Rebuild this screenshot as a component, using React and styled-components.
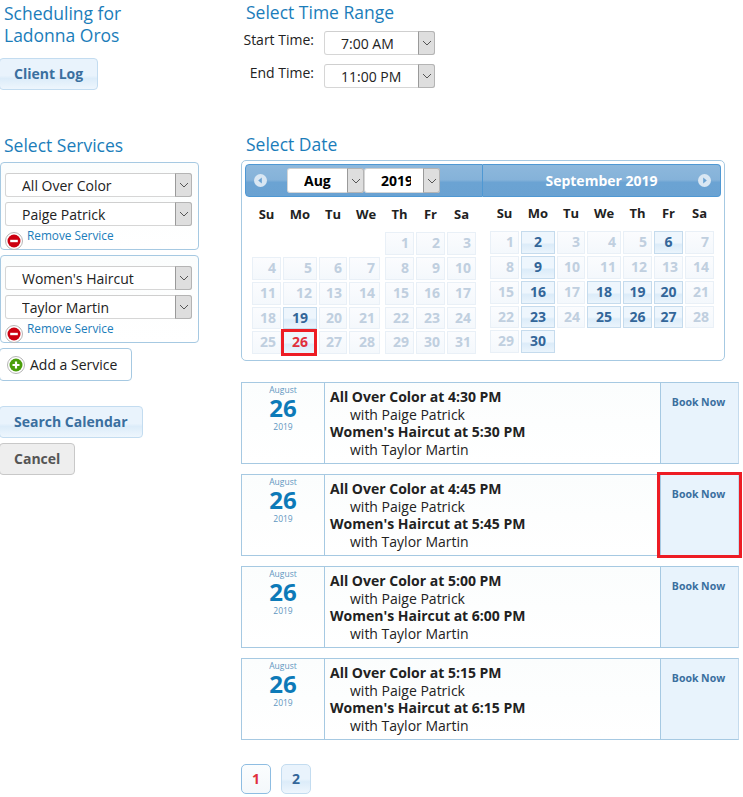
import React from 'react';
import styled, { createGlobalStyle } from 'styled-components';

const GlobalStyle = createGlobalStyle`
  html, body {
    margin: 0;
    padding: 0;
    background: #fff;
    overflow: hidden;
  }

  body {
    color: #222;
    font-family: "Open Sans", "Liberation Sans", sans-serif;
    font-size: 14px;
  }
`;

const Page = styled.div`
  display: grid;
  grid-template-columns: 241px 502px;
  width: 743px;
  height: 797px;
`;

const LeftColumn = styled.div`
  display: flex;
  flex-direction: column;
  align-items: flex-start;
  padding-top: 2px;
`;

const RightColumn = styled.div`
  display: flex;
  flex-direction: column;
  padding-top: 1px;
`;

const Heading = styled.h2`
  margin: ${({ $margin }) => $margin || 0};
  color: #1b7dba;
  font-size: 17.5px;
  font-weight: 400;
  line-height: 22px;
`;

const Button = styled.button`
  display: block;
  height: 32px;
  margin: ${({ $margin }) => $margin || 0};
  margin-left: -1px;
  padding: 0 14px 2px;
  border: 1px solid ${({ $muted }) => ($muted ? '#c8c8c8' : '#c3dcf0')};
  border-radius: 4px;
  background: ${({ $muted }) => ($muted
    ? '#eeeeee'
    : 'linear-gradient(#e9f3fc 0, #e9f3fc 55%, #dcecf9 65%, #eef6fd 100%)')};
  color: ${({ $muted }) => ($muted ? '#555' : '#3a6f9f')};
  font-family: inherit;
  font-size: 14px;
  font-weight: 700;
`;

const ServiceBox = styled.div`
  box-sizing: border-box;
  width: 199px;
  height: 88px;
  margin-top: ${({ $top }) => $top}px;
  padding: 10px 6px 0 4px;
  border: 1px solid #a6c9e2;
  border-radius: 4px;
  background: linear-gradient(#fbfdfd, #fff);
`;

const SelectBox = styled.div`
  box-sizing: border-box;
  display: flex;
  align-items: stretch;
  flex: none;
  width: ${({ $width }) => $width}px;
  height: ${({ $height }) => $height || 24}px;
  margin-bottom: ${({ $gap }) => $gap || 0}px;
  border: 1px solid #d6d6d6;
  border-top-color: #cfcfcf;
  border-radius: 3px;
  background: #fff;
`;

const SelectText = styled.span`
  flex: 1;
  min-width: 0;
  overflow: hidden;
  margin: 0 ${({ $bold }) => ($bold ? 12 : 0)}px 0 16px;
  color: ${({ $bold }) => ($bold ? '#000' : '#222')};
  font-size: 14px;
  font-weight: ${({ $bold }) => ($bold ? 700 : 400)};
  line-height: 23px;
  white-space: nowrap;
`;

const SelectArrow = styled.span`
  box-sizing: border-box;
  display: flex;
  align-items: center;
  justify-content: center;
  flex: none;
  width: 17px;
  margin: -1px -1px -1px 0;
  border: 1px solid #b4b4b4;
  border-left-color: #9a9a9a;
  border-radius: 0 3px 3px 0;
  background: #dedede;
`;

const Select = ({ children, width, gap, bold, height }) => (
  <SelectBox $width={width} $gap={gap} $height={height}>
    <SelectText $bold={bold}>{children}</SelectText>
    <SelectArrow>
      <svg width="10" height="6" viewBox="0 0 10 6" fill="none" stroke="#555" strokeWidth="1">
        <path d="M1 1l4 4 4-4" />
      </svg>
    </SelectArrow>
  </SelectBox>
);

const RemoveRow = styled.div`
  display: flex;
  align-items: flex-start;
  margin-top: 6px;
`;

const RemoveLink = styled.a`
  margin: -4px 0 0 4px;
  color: #1b7dba;
  font-size: 11.8px;
  line-height: 15px;
`;

const RoundIcon = ({ kind }) => (
  <svg width="18" height="18" viewBox="0 0 18 18">
    <circle cx="9" cy="9" r="8.5" fill="#fff" stroke="#b5b5b5" />
    <circle cx="9" cy="9" r="6.5" fill={kind === 'add' ? '#4a9e0a' : '#cc0010'} />
    {kind === 'add' ? (
      <path d="M9 5.5v7M5.5 9h7" stroke="#fff" strokeWidth="2.2" />
    ) : (
      <path d="M5.2 9h7.6" stroke="#fff" strokeWidth="2.4" />
    )}
  </svg>
);

const AddButton = styled.div`
  box-sizing: border-box;
  display: flex;
  align-items: center;
  gap: 5px;
  width: 133px;
  height: 33px;
  margin: 5px 0 0 -1px;
  padding-left: 7px;
  border: 1px solid #a6c9e2;
  border-radius: 4px;
  color: #222;
  font-size: 14px;
`;

const TimeRow = styled.div`
  display: flex;
  align-items: flex-start;
  margin-bottom: ${({ $gap }) => $gap}px;
`;

const TimeLabel = styled.span`
  width: 73px;
  margin-right: 10px;
  color: #222;
  font-size: 14px;
  line-height: 18px;
  text-align: right;
  white-space: nowrap;
`;

const Calendar = styled.div`
  box-sizing: border-box;
  display: flex;
  flex-direction: column;
  width: 484px;
  height: 201px;
  margin-top: 5px;
  padding: 3px;
  border: 1px solid #a6c9e2;
  border-radius: 5px;
`;

const CalendarHeader = styled.div`
  display: grid;
  grid-template-columns: 238px 1fr;
  height: 33px;
  flex: none;
`;

const headerBar = `
  background: linear-gradient(#8db8dc 0, #85b2d9 48%, #6ba3d3 56%, #6aa2d2 100%);
  border: 1px solid #4f98d3;
  box-sizing: border-box;
`;

const HeaderLeft = styled.div`
  ${headerBar}
  display: flex;
  align-items: flex-start;
  padding: 3px 0 0 8px;
  border-radius: 4px 0 0 4px;
`;

const HeaderRight = styled.div`
  ${headerBar}
  display: flex;
  align-items: center;
  justify-content: center;
  position: relative;
  border-left: 0;
  border-radius: 0 4px 4px 0;
  color: #fff;
  font-size: 14px;
  font-weight: 700;
`;

const NavIcon = styled.span`
  position: absolute;
  top: 9px;
  right: 9px;
  display: flex;
`;

const NavArrow = ({ dir }) => (
  <svg width="13" height="13" viewBox="0 0 13 13">
    <circle cx="6.5" cy="6.5" r="6.5" fill="#d9e7f3" />
    <path d={dir === 'left' ? 'M7.8 3.5v6l-3.6-3z' : 'M5.2 3.5v6l3.6-3z'} fill="#6ba3d3" />
  </svg>
);

const PrevSlot = styled.span`
  display: flex;
  margin: 6px 20px 0 0;
`;

const Months = styled.div`
  display: grid;
  grid-template-columns: 238px 1fr;
`;

const Month = styled.div`
  display: grid;
  grid-template-columns: 29px 34px 28px 34px 29px 29px 29px;
  grid-template-rows: 24px 23px 23px 23px 22px 23px;
  gap: 2px;
  align-content: start;
  padding: ${({ $first }) => ($first ? '9px 0 0 7px' : '8px 0 0 7px')};
`;

const Weekday = styled.span`
  color: #222;
  font-size: 13px;
  font-weight: 700;
  line-height: 16px;
  text-align: center;
`;

const Day = styled.span`
  box-sizing: border-box;
  position: relative;
  grid-column-start: ${({ $start }) => $start || 'auto'};
  margin-right: ${({ $trim }) => $trim || 0}px;
  padding: ${({ $open }) => ($open ? '0' : '0 4px 0 0')};
  border: 1px solid ${({ $open }) => ($open ? '#c5dbed' : '#e9f0f7')};
  background: ${({ $open }) => ($open
    ? 'linear-gradient(#eef6fd 0, #eef6fd 50%, #dcecf9 60%, #eaf4fc 100%)'
    : 'linear-gradient(#fbfcfe, #f4f8fc)')};
  color: ${({ $open, $today }) => ($today ? '#e0303c' : $open ? '#336699' : '#c0cfdf')};
  font-size: 14px;
  font-weight: 700;
  line-height: 20px;
  text-align: ${({ $open }) => ($open ? 'center' : 'right')};
`;

const DayMark = styled.span`
  position: absolute;
  inset: -3px -1px -3px -3px;
  border: 3px solid #ed1c24;
`;

const WEEKDAYS = ['Su', 'Mo', 'Tu', 'We', 'Th', 'Fr', 'Sa'];

const MonthGrid = ({ days, firstColumn, open, today, first }) => (
  <Month $first={first}>
    {WEEKDAYS.map((name) => <Weekday key={name}>{name}</Weekday>)}
    {Array.from({ length: days }, (_, i) => i + 1).map((day) => {
      const column = (firstColumn + day - 1) % 7;
      return (
        <Day
          key={day}
          $start={day === 1 ? firstColumn + 1 : undefined}
          $trim={first && column === 3 ? 3 : 0}
          $open={open.includes(day) || day === today}
          $today={day === today}
        >
          {day}
          {day === today && <DayMark />}
        </Day>
      );
    })}
  </Month>
);

const ResultList = styled.div`
  display: flex;
  flex-direction: column;
  gap: 10px;
  width: 498px;
  margin-top: 21px;
`;

const ResultRow = styled.div`
  box-sizing: border-box;
  display: grid;
  grid-template-columns: 83px 1fr 78px;
  height: 82px;
  border: 1px solid #a6c9e2;
  border-right-color: #c5dbed;
  background: linear-gradient(#fbfdfd, #fff);
`;

const DateCell = styled.div`
  display: flex;
  flex-direction: column;
  align-items: center;
  padding-top: 1px;
  border-right: 1px solid #a6c9e2;
`;

const DateSmall = styled.span`
  color: #5f96c0;
  font-size: 8.5px;
  line-height: 12px;
`;

const DateBig = styled.span`
  margin-bottom: 2px;
  color: #0d7ab8;
  font-size: 24px;
  font-weight: 700;
  line-height: 23px;
`;

const SlotCell = styled.div`
  padding: 5px 0 0 5px;
  color: #222;
  font-size: 14px;
  line-height: 17.5px;
`;

const SlotTitle = styled.div`
  font-weight: 700;
`;

const SlotWith = styled.div`
  padding-left: 20px;
`;

const BookCell = styled.div`
  position: relative;
  padding: 12px 2px 0 0;
  border-left: 1px solid #a6c9e2;
  background: #e8f3fc;
  color: #3a6f9f;
  font-size: 10.5px;
  font-weight: 700;
  line-height: 15px;
  text-align: center;
`;

const BookMark = styled.span`
  position: absolute;
  inset: -3px -4px -3px -4px;
  border: 3px solid #ed1c24;
`;

const Pager = styled.div`
  display: flex;
  gap: 10px;
  margin-top: 24px;
`;

const PageButton = styled.span`
  box-sizing: border-box;
  width: 30px;
  height: 30px;
  border: 1px solid ${({ $active }) => ($active ? '#8ebde2' : '#c3dcf0')};
  border-radius: 5px;
  background: ${({ $active }) => ($active
    ? 'linear-gradient(#fbfdfe, #f4f8fb)'
    : 'linear-gradient(#e9f3fc 0, #e9f3fc 50%, #dcecf9 60%, #eef6fd 100%)')};
  color: ${({ $active }) => ($active ? '#e0303c' : '#336699')};
  font-size: 14px;
  font-weight: 700;
  line-height: 28px;
  text-align: center;
`;

const SLOTS = [
  ['4:30 PM', '5:30 PM'],
  ['4:45 PM', '5:45 PM'],
  ['5:00 PM', '6:00 PM'],
  ['5:15 PM', '6:15 PM'],
];

const services = [
  { service: "All Over Color", staff: 'Paige Patrick', top: 6 },
  { service: "Women's Haircut", staff: 'Taylor Martin', top: 5 },
];

export default function App() {
  return (
    <Page>
      <GlobalStyle />
      <LeftColumn>
        <Heading $margin="0 0 0 4px">Scheduling for<br />Ladonna Oros</Heading>
        <Button $margin="12px 0 0">Client Log</Button>
        <Heading $margin="44px 0 0 4px">Select Services</Heading>
        {services.map(({ service, staff, top }) => (
          <ServiceBox key={service} $top={top}>
            <Select width={187} gap={5}>{service}</Select>
            <Select width={187}>{staff}</Select>
            <RemoveRow>
              <RoundIcon kind="remove" />
              <RemoveLink>Remove Service</RemoveLink>
            </RemoveRow>
          </ServiceBox>
        ))}
        <AddButton>
          <RoundIcon kind="add" />
          Add a Service
        </AddButton>
        <Button $margin="25px 0 0">Search Calendar</Button>
        <Button $muted $margin="5px 0 0">Cancel</Button>
      </LeftColumn>
      <RightColumn>
        <Heading $margin="0 0 8px 5px">Select Time Range</Heading>
        <TimeRow $gap={9}>
          <TimeLabel>Start Time:</TimeLabel>
          <Select width={111}>7:00 AM</Select>
        </TimeRow>
        <TimeRow $gap={0}>
          <TimeLabel>End Time:</TimeLabel>
          <Select width={111}>11:00 PM</Select>
        </TimeRow>
        <Heading $margin="45px 0 0 5px">Select Date</Heading>
        <Calendar>
          <CalendarHeader>
            <HeaderLeft>
              <PrevSlot><NavArrow dir="left" /></PrevSlot>
              <Select width={77} height={25} bold>Aug</Select>
              <Select width={76} height={25} bold>2019</Select>
            </HeaderLeft>
            <HeaderRight>
              September 2019
              <NavIcon><NavArrow dir="right" /></NavIcon>
            </HeaderRight>
          </CalendarHeader>
          <Months>
            <MonthGrid first days={31} firstColumn={4} open={[19]} today={26} />
            <MonthGrid days={30} firstColumn={0} open={[2, 6, 9, 16, 18, 19, 20, 23, 25, 26, 27, 30]} />
          </Months>
        </Calendar>
        <ResultList>
          {SLOTS.map(([first, second], index) => (
            <ResultRow key={first}>
              <DateCell>
                <DateSmall>August</DateSmall>
                <DateBig>26</DateBig>
                <DateSmall>2019</DateSmall>
              </DateCell>
              <SlotCell>
                <SlotTitle>All Over Color at {first}</SlotTitle>
                <SlotWith>with Paige Patrick</SlotWith>
                <SlotTitle>Women's Haircut at {second}</SlotTitle>
                <SlotWith>with Taylor Martin</SlotWith>
              </SlotCell>
              <BookCell>
                Book Now
                {index === 1 && <BookMark />}
              </BookCell>
            </ResultRow>
          ))}
        </ResultList>
        <Pager>
          <PageButton $active>1</PageButton>
          <PageButton>2</PageButton>
        </Pager>
      </RightColumn>
    </Page>
  );
}
